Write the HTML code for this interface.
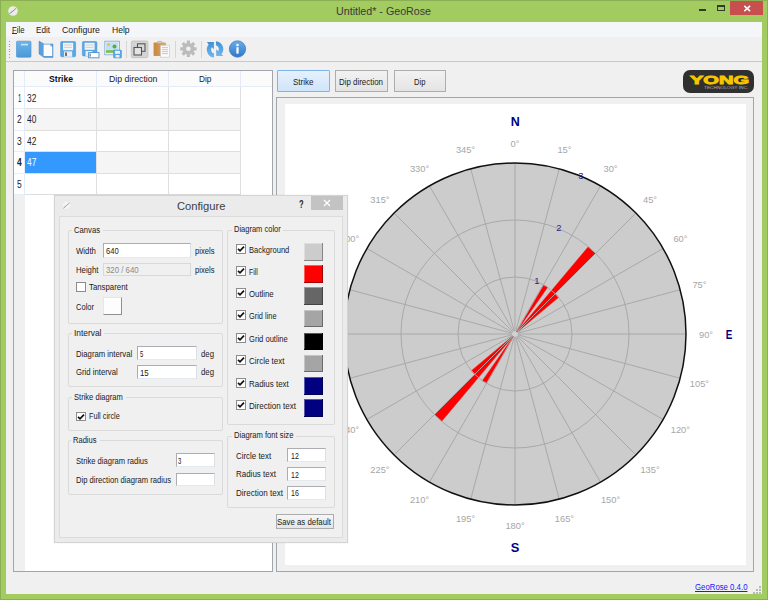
<!DOCTYPE html>
<html><head><meta charset="utf-8">
<style>
*{margin:0;padding:0;box-sizing:border-box}
html,body{width:768px;height:600px;overflow:hidden;background:#a2cb60;font-family:"Liberation Sans",sans-serif;color:#000;position:relative}
.a{position:absolute}
.t{position:absolute;white-space:nowrap;line-height:1}
</style></head><body>
<div class="a" style="left:0px;top:0px;width:768px;height:600px;background:#a2cb60;border:1px solid #8cae55"></div>
<svg class="a" style="left:7px;top:5px" width="12" height="12" viewBox="0 0 12 12"><circle cx="6" cy="6" r="4.8" fill="#ecebe8"/><path d="M2.6 8.6 L6 6" stroke="#4a90c8" stroke-width="1"/><path d="M6 6 L9.2 3.2" stroke="#d87a3a" stroke-width="1"/></svg>
<div class="t" style="left:336.00px;top:5.66px;font-size:11.50px;color:#3a3a3a;font-weight:normal;font-family:'Liberation Sans';transform:scaleX(0.929);transform-origin:0 50%;">Untitled* - GeoRose</div>
<div class="a" style="left:699px;top:9px;width:6.5px;height:2px;background:#303a2a"></div>
<div class="a" style="left:717px;top:5px;width:8px;height:6px;border:1px solid #2f3a28;border-top-width:2px"></div>
<div class="a" style="left:730px;top:1px;width:33px;height:14px;background:#c7504f"></div>
<svg class="a" style="left:741.6px;top:2.8px" width="11" height="11" viewBox="0 0 11 11"><path d="M2.3 2.9L8.1 8.1M8.1 2.9L2.3 8.1" stroke="#fff" stroke-width="1.5"/></svg>
<div class="a" style="left:6px;top:22px;width:756px;height:15px;background:#f5f6f9"></div>
<div class="t" style="left:12.00px;top:24.57px;font-size:9.60px;color:#1a1a1a;font-weight:normal;font-family:'Liberation Sans';transform:scaleX(0.808);transform-origin:0 50%;">File</div>
<div class="a" style="left:12px;top:33px;width:5px;height:1px;background:#333"></div>
<div class="t" style="left:36.00px;top:24.57px;font-size:9.60px;color:#1a1a1a;font-weight:normal;font-family:'Liberation Sans';transform:scaleX(0.846);transform-origin:0 50%;">Edit</div>
<div class="t" style="left:62.00px;top:24.57px;font-size:9.60px;color:#1a1a1a;font-weight:normal;font-family:'Liberation Sans';transform:scaleX(0.913);transform-origin:0 50%;">Configure</div>
<div class="t" style="left:111.70px;top:24.57px;font-size:9.60px;color:#1a1a1a;font-weight:normal;font-family:'Liberation Sans';transform:scaleX(0.892);transform-origin:0 50%;">Help</div>
<div class="a" style="left:6px;top:37px;width:756px;height:24px;background:#f0f0f0"></div>
<div class="a" style="left:6px;top:61px;width:756px;height:1px;background:#c9c9c9"></div>
<div class="a" style="left:9px;top:41px;width:1px;height:1px;background:#9a9a9a"></div>
<div class="a" style="left:9px;top:43.6px;width:1px;height:1px;background:#9a9a9a"></div>
<div class="a" style="left:9px;top:46.2px;width:1px;height:1px;background:#9a9a9a"></div>
<div class="a" style="left:9px;top:48.8px;width:1px;height:1px;background:#9a9a9a"></div>
<div class="a" style="left:9px;top:51.4px;width:1px;height:1px;background:#9a9a9a"></div>
<div class="a" style="left:9px;top:54px;width:1px;height:1px;background:#9a9a9a"></div>
<div class="a" style="left:9px;top:56.6px;width:1px;height:1px;background:#9a9a9a"></div>
<div class="a" style="left:126px;top:41px;width:1px;height:17px;background:#d6d6d6"></div>
<div class="a" style="left:175px;top:41px;width:1px;height:17px;background:#d6d6d6"></div>
<div class="a" style="left:201px;top:41px;width:1px;height:17px;background:#d6d6d6"></div>
<div class="a" style="left:6px;top:62px;width:756px;height:532px;background:#f0f0f0"></div>

<svg class="a" style="left:0;top:0" width="260" height="62" viewBox="0 0 260 62">
 <defs>
  <linearGradient id="gb" x1="0" y1="0" x2="0" y2="1"><stop offset="0" stop-color="#6db4ea"/><stop offset="1" stop-color="#4a9ad8"/></linearGradient>
  <linearGradient id="gi" x1="0" y1="0" x2="0" y2="1"><stop offset="0" stop-color="#6aaeea"/><stop offset="1" stop-color="#2f78c8"/></linearGradient>
  <linearGradient id="gc" x1="0" y1="0" x2="1" y2="0"><stop offset="0" stop-color="#c68840"/><stop offset="1" stop-color="#e0a868"/></linearGradient>
 </defs>
 <!-- 1 book -->
 <rect x="16.5" y="41.2" width="14.5" height="16" rx="1" fill="url(#gb)" stroke="#4a8fd0" stroke-width="0.6"/>
 <rect x="21" y="43.8" width="7" height="1.6" fill="#c8e4f8"/>
 <!-- 2 new doc -->
 <path d="M39 41 L44 44 L53 44 L53 57.5 L44 57.5 L39 54 Z" fill="#5a9fda" stroke="#4a8ccc" stroke-width="0.5"/>
 <path d="M43.6 44.6 L50 44.6 L52.2 46.8 L52.2 56 L43.6 56 Z" fill="#fbfbfb"/>
 <path d="M50 44.6 L50 46.8 L52.2 46.8" fill="#d0d0d0"/>
 <!-- 3 floppy -->
 <rect x="60.6" y="41.5" width="15" height="15.3" rx="1.2" fill="#58a6e2" stroke="#3f8fd2" stroke-width="0.5"/>
 <rect x="63" y="42.8" width="10.2" height="7.4" fill="#f4f4f4"/>
 <path d="M64 45h8M64 47.4h8" stroke="#b8b8b8" stroke-width="0.6"/>
 <rect x="64" y="51.4" width="8.2" height="5.4" fill="#e8eef4"/>
 <rect x="65.2" y="52.4" width="1.6" height="3.6" fill="#555"/>
 <!-- 4 save as -->
 <rect x="82.4" y="41.5" width="14.5" height="14.5" rx="1.2" fill="#58a6e2" stroke="#3f8fd2" stroke-width="0.5"/>
 <rect x="84.6" y="42.8" width="10" height="7" fill="#f4f4f4"/>
 <path d="M85.5 45h8M85.5 47.4h8" stroke="#b8b8b8" stroke-width="0.6"/>
 <rect x="85.5" y="51" width="7" height="5" fill="#e8eef4"/>
 <rect x="88.6" y="52.6" width="10.4" height="5.2" fill="#fff" stroke="#4a90d0" stroke-width="0.9"/>
 <rect x="89.6" y="53.6" width="1" height="3" fill="#555"/>
 <!-- 5 export image -->
 <rect x="104.8" y="41.2" width="14.6" height="13.6" fill="#e9f2fa" stroke="#7aa8d8" stroke-width="0.8"/>
 <rect x="106" y="42.4" width="12.2" height="7.8" fill="#bfe0f8"/>
 <rect x="106" y="50.2" width="12.2" height="2.6" fill="#7cbc48"/>
 <circle cx="108.5" cy="44.6" r="1.5" fill="#f5c030"/>
 <circle cx="114.5" cy="46.5" r="2" fill="#5ea83a"/>
 <rect x="113.5" y="50" width="8" height="8" rx="1" fill="#58a6e2" stroke="#3f8fd2" stroke-width="0.5"/>
 <rect x="115" y="50.8" width="5" height="3" fill="#f0f0f0"/>
 <rect x="115.5" y="55" width="4" height="2.5" fill="#e6eef6"/>
 <!-- 6 copy pressed -->
 <rect x="131.3" y="41" width="16.6" height="16.7" rx="1.5" fill="#d4d4d4" stroke="#bdbdbd" stroke-width="0.8"/>
 <rect x="137.5" y="43.8" width="7.5" height="7.5" fill="#d8d8d8" stroke="#555" stroke-width="1.1"/>
 <rect x="134" y="47.5" width="7.5" height="7.5" fill="#e4e4e4" stroke="#555" stroke-width="1.1"/>
 <!-- 7 paste -->
 <rect x="153.6" y="42.5" width="12.4" height="13.5" rx="0.8" fill="url(#gc)"/>
 <rect x="157.5" y="41.3" width="4.5" height="2.4" rx="0.8" fill="#c8c8c8" stroke="#999" stroke-width="0.4"/>
 <rect x="160.5" y="45.2" width="9" height="12" fill="#fafafa" stroke="#c4c4c4" stroke-width="0.6"/>
 <path d="M162 47.6h6M162 49.6h6M162 51.6h6M162 53.6h6" stroke="#9a9a9a" stroke-width="0.5"/>
 <!-- 8 gear -->
 <g transform="translate(188.4 48.8)" fill="#bcbcbc">
  <circle r="6" />
  <g>
   <rect x="-1.6" y="-8.2" width="3.2" height="3" rx="0.5"/>
   <rect x="-1.6" y="5.2" width="3.2" height="3" rx="0.5"/>
   <rect x="-8.2" y="-1.6" width="3" height="3.2" rx="0.5"/>
   <rect x="5.2" y="-1.6" width="3" height="3.2" rx="0.5"/>
  </g>
  <g transform="rotate(45)">
   <rect x="-1.6" y="-8.2" width="3.2" height="3" rx="0.5"/>
   <rect x="-1.6" y="5.2" width="3.2" height="3" rx="0.5"/>
   <rect x="-8.2" y="-1.6" width="3" height="3.2" rx="0.5"/>
   <rect x="5.2" y="-1.6" width="3" height="3.2" rx="0.5"/>
  </g>
  <circle r="2.3" fill="#f0f0f0"/>
 </g>
 <!-- 9 refresh -->
 <defs><linearGradient id="gr" x1="0" y1="0" x2="0" y2="1"><stop offset="0" stop-color="#3f90da"/><stop offset="1" stop-color="#72b8ee"/></linearGradient></defs>
 <g fill="url(#gr)">
  <path d="M214 57.6 A8 8 0 0 1 208.6 44.6 L206.9 42.1 L213.9 42.1 L213.9 49.2 L211.8 47.2 A4.2 4.2 0 0 0 214 53.6 Z"/>
  <path d="M216 41.2 A8 8 0 0 1 221.5 54.2 L223.4 56 L216.2 56 L216.2 49.2 L218.3 51.3 A4.2 4.2 0 0 0 216 45.2 Z"/>
 </g>
 <!-- 10 info -->
 <circle cx="237.5" cy="49" r="8.2" fill="url(#gi)" stroke="#2f6fb8" stroke-width="0.6"/>
 <circle cx="237.5" cy="45" r="1.3" fill="#fff"/>
 <rect x="236.4" y="47.2" width="2.2" height="6.4" fill="#fff"/>
</svg>

<div class="a" style="left:13px;top:70px;width:260px;height:502px;background:#fff;border:1px solid #a2a6ac"></div>
<div class="a" style="left:14px;top:71px;width:258px;height:15px;background:#fbfbfb"></div>
<div class="a" style="left:14px;top:86px;width:258px;height:1px;background:#e3ecf8"></div>
<div class="a" style="left:14px;top:195px;width:11px;height:376px;background:#f0f0f0"></div>
<div class="a" style="left:25px;top:108px;width:215px;height:22px;background:#f5f5f5"></div>
<div class="a" style="left:25px;top:151px;width:215px;height:22px;background:#f5f5f5"></div>
<div class="a" style="left:25px;top:152px;width:71.5px;height:21px;background:#3399ff"></div>
<div class="a" style="left:25px;top:108px;width:216px;height:1px;background:#dedede"></div>
<div class="a" style="left:25px;top:130px;width:216px;height:1px;background:#dedede"></div>
<div class="a" style="left:25px;top:151px;width:216px;height:1px;background:#dedede"></div>
<div class="a" style="left:25px;top:173px;width:216px;height:1px;background:#dedede"></div>
<div class="a" style="left:25px;top:194px;width:216px;height:1px;background:#dedede"></div>
<div class="a" style="left:14px;top:108px;width:11px;height:1px;background:#e6eef8"></div>
<div class="a" style="left:14px;top:130px;width:11px;height:1px;background:#e6eef8"></div>
<div class="a" style="left:14px;top:151px;width:11px;height:1px;background:#e6eef8"></div>
<div class="a" style="left:14px;top:173px;width:11px;height:1px;background:#e6eef8"></div>
<div class="a" style="left:14px;top:194px;width:11px;height:1px;background:#e6eef8"></div>
<div class="a" style="left:24px;top:71px;width:1px;height:124px;background:#e3ecf8"></div>
<div class="a" style="left:96px;top:71px;width:1px;height:15px;background:#e3ecf8"></div>
<div class="a" style="left:96px;top:87px;width:1px;height:108px;background:#dedede"></div>
<div class="a" style="left:168px;top:71px;width:1px;height:15px;background:#e3ecf8"></div>
<div class="a" style="left:168px;top:87px;width:1px;height:108px;background:#dedede"></div>
<div class="a" style="left:240px;top:71px;width:1px;height:15px;background:#e3ecf8"></div>
<div class="a" style="left:240px;top:87px;width:1px;height:108px;background:#dedede"></div>
<div class="t" style="left:49.20px;top:73.97px;font-size:9.60px;color:#111;font-weight:bold;font-family:'Liberation Sans';transform:scaleX(0.900);transform-origin:0 50%;">Strike</div>
<div class="t" style="left:108.75px;top:73.97px;font-size:9.60px;color:#222;font-weight:normal;font-family:'Liberation Sans';transform:scaleX(0.909);transform-origin:0 50%;">Dip direction</div>
<div class="t" style="left:198.60px;top:73.97px;font-size:9.60px;color:#222;font-weight:normal;font-family:'Liberation Sans';transform:scaleX(0.868);transform-origin:0 50%;">Dip</div>
<div class="t" style="left:17.60px;top:93.58px;font-size:10.00px;color:#222;font-weight:normal;font-family:'Liberation Sans';transform:scaleX(0.593);transform-origin:0 50%;">1</div>
<div class="t" style="left:27.20px;top:93.58px;font-size:10.00px;color:#222;font-weight:normal;font-family:'Liberation Sans';transform:scaleX(0.836);transform-origin:0 50%;">32</div>
<div class="t" style="left:17.00px;top:114.98px;font-size:10.00px;color:#222;font-weight:normal;font-family:'Liberation Sans';transform:scaleX(0.845);transform-origin:0 50%;">2</div>
<div class="t" style="left:27.20px;top:114.98px;font-size:10.00px;color:#222;font-weight:normal;font-family:'Liberation Sans';transform:scaleX(0.836);transform-origin:0 50%;">40</div>
<div class="t" style="left:17.00px;top:136.58px;font-size:10.00px;color:#222;font-weight:normal;font-family:'Liberation Sans';transform:scaleX(0.845);transform-origin:0 50%;">3</div>
<div class="t" style="left:27.20px;top:136.58px;font-size:10.00px;color:#222;font-weight:normal;font-family:'Liberation Sans';transform:scaleX(0.836);transform-origin:0 50%;">42</div>
<div class="t" style="left:17.00px;top:158.18px;font-size:10.00px;color:#222;font-weight:bold;font-family:'Liberation Sans';transform:scaleX(0.845);transform-origin:0 50%;">4</div>
<div class="t" style="left:27.20px;top:158.18px;font-size:10.00px;color:#fff;font-weight:normal;font-family:'Liberation Sans';transform:scaleX(0.836);transform-origin:0 50%;">47</div>
<div class="t" style="left:17.00px;top:179.88px;font-size:10.00px;color:#222;font-weight:normal;font-family:'Liberation Sans';transform:scaleX(0.845);transform-origin:0 50%;">5</div>
<div class="a" style="left:277px;top:70px;width:53px;height:22px;background:linear-gradient(#e6f1fc,#cfe5fa);border:1px solid #7eb4ea;border-radius:1px"></div>
<div class="a" style="left:335px;top:70px;width:53px;height:22px;background:linear-gradient(#f2f2f2,#e4e4e4);border:1px solid #adadad"></div>
<div class="a" style="left:394px;top:70px;width:52px;height:22px;background:linear-gradient(#f2f2f2,#e4e4e4);border:1px solid #adadad"></div>
<div class="t" style="left:292.90px;top:77.17px;font-size:9.60px;color:#1a1a1a;font-weight:normal;font-family:'Liberation Sans';transform:scaleX(0.832);transform-origin:0 50%;">Strike</div>
<div class="t" style="left:339.10px;top:77.17px;font-size:9.60px;color:#1a1a1a;font-weight:normal;font-family:'Liberation Sans';transform:scaleX(0.825);transform-origin:0 50%;">Dip direction</div>
<div class="t" style="left:414.30px;top:77.17px;font-size:9.60px;color:#1a1a1a;font-weight:normal;font-family:'Liberation Sans';transform:scaleX(0.791);transform-origin:0 50%;">Dip</div>
<div class="a" style="left:683px;top:70px;width:71px;height:22.5px;background:#303030;border-radius:7px"></div>
<div class="t" style="left:689.80px;top:74.70px;font-size:11.00px;color:#f7c600;font-weight:bold;font-family:'Liberation Sans';transform:scaleX(1.821);transform-origin:0 50%;-webkit-text-stroke:0.8px #f7c600;">YONG</div>
<div class="t" style="left:704.30px;top:86.77px;font-size:3.80px;color:#b0b0b0;font-weight:normal;font-family:'Liberation Sans';transform:scaleX(1.260);transform-origin:0 50%;">TECHNOLOGY INC.</div>
<div class="a" style="left:276px;top:97px;width:478px;height:475px;background:#f0f0f0;border:1px solid #a2a6ac"></div>
<div class="a" style="left:285px;top:104px;width:461px;height:461px;background:#fff"></div>
<svg class="a" style="left:0;top:0" width="768" height="600" viewBox="0 0 768 600"><circle cx="515" cy="334" r="171" fill="#cccccc"/><path d="M515.00 334.00 L543.50 284.64 L547.69 287.31Z M515.00 334.00 L588.28 246.67 L595.61 253.39Z M515.00 334.00 L555.31 293.69 L558.66 297.36Z M515.00 334.00 L486.50 383.36 L482.31 380.69Z M515.00 334.00 L441.72 421.33 L434.39 414.61Z M515.00 334.00 L474.69 374.31 L471.34 370.64Z" fill="#ff0000" stroke="#ee1010" stroke-width="0.4"/><path d="M515.00 331.00L515.00 163.00M515.78 331.10L559.26 168.83M516.50 331.40L600.50 185.91M517.12 331.88L635.92 213.08M517.60 332.50L663.09 248.50M517.90 333.22L680.17 289.74M518.00 334.00L686.00 334.00M517.90 334.78L680.17 378.26M517.60 335.50L663.09 419.50M517.12 336.12L635.92 454.92M516.50 336.60L600.50 482.09M515.78 336.90L559.26 499.17M515.00 337.00L515.00 505.00M514.22 336.90L470.74 499.17M513.50 336.60L429.50 482.09M512.88 336.12L394.08 454.92M512.40 335.50L366.91 419.50M512.10 334.78L349.83 378.26M512.00 334.00L344.00 334.00M512.10 333.22L349.83 289.74M512.40 332.50L366.91 248.50M512.88 331.88L394.08 213.08M513.50 331.40L429.50 185.91M514.22 331.10L470.74 168.83" stroke="#a6a6a6" stroke-width="0.95" fill="none"/><circle cx="515" cy="334" r="57" fill="none" stroke="#a6a6a6" stroke-width="0.95"/><circle cx="515" cy="334" r="114" fill="none" stroke="#a6a6a6" stroke-width="0.95"/><circle cx="515" cy="334" r="171" fill="none" stroke="#111" stroke-width="1.5"/><circle cx="515" cy="334" r="2.6" fill="#d2d2d2"/></svg>
<div class="t" style="left:510.55px;top:139.82px;font-size:9.30px;color:#a6a6a6;font-weight:normal;font-family:'Liberation Sans';">0°</div>
<div class="t" style="left:557.40px;top:146.33px;font-size:9.30px;color:#a6a6a6;font-weight:normal;font-family:'Liberation Sans';">15°</div>
<div class="t" style="left:603.47px;top:165.41px;font-size:9.30px;color:#a6a6a6;font-weight:normal;font-family:'Liberation Sans';">30°</div>
<div class="t" style="left:643.03px;top:195.76px;font-size:9.30px;color:#a6a6a6;font-weight:normal;font-family:'Liberation Sans';">45°</div>
<div class="t" style="left:673.38px;top:235.32px;font-size:9.30px;color:#a6a6a6;font-weight:normal;font-family:'Liberation Sans';">60°</div>
<div class="t" style="left:692.46px;top:281.38px;font-size:9.30px;color:#a6a6a6;font-weight:normal;font-family:'Liberation Sans';">75°</div>
<div class="t" style="left:698.97px;top:330.82px;font-size:9.30px;color:#a6a6a6;font-weight:normal;font-family:'Liberation Sans';">90°</div>
<div class="t" style="left:689.87px;top:380.25px;font-size:9.30px;color:#a6a6a6;font-weight:normal;font-family:'Liberation Sans';">105°</div>
<div class="t" style="left:670.79px;top:426.32px;font-size:9.30px;color:#a6a6a6;font-weight:normal;font-family:'Liberation Sans';">120°</div>
<div class="t" style="left:640.44px;top:465.87px;font-size:9.30px;color:#a6a6a6;font-weight:normal;font-family:'Liberation Sans';">135°</div>
<div class="t" style="left:600.88px;top:496.23px;font-size:9.30px;color:#a6a6a6;font-weight:normal;font-family:'Liberation Sans';">150°</div>
<div class="t" style="left:554.82px;top:515.31px;font-size:9.30px;color:#a6a6a6;font-weight:normal;font-family:'Liberation Sans';">165°</div>
<div class="t" style="left:505.38px;top:521.82px;font-size:9.30px;color:#a6a6a6;font-weight:normal;font-family:'Liberation Sans';">180°</div>
<div class="t" style="left:455.95px;top:515.31px;font-size:9.30px;color:#a6a6a6;font-weight:normal;font-family:'Liberation Sans';">195°</div>
<div class="t" style="left:409.88px;top:496.23px;font-size:9.30px;color:#a6a6a6;font-weight:normal;font-family:'Liberation Sans';">210°</div>
<div class="t" style="left:370.33px;top:465.87px;font-size:9.30px;color:#a6a6a6;font-weight:normal;font-family:'Liberation Sans';">225°</div>
<div class="t" style="left:339.97px;top:426.32px;font-size:9.30px;color:#a6a6a6;font-weight:normal;font-family:'Liberation Sans';">240°</div>
<div class="t" style="left:320.89px;top:380.25px;font-size:9.30px;color:#a6a6a6;font-weight:normal;font-family:'Liberation Sans';">255°</div>
<div class="t" style="left:314.38px;top:330.82px;font-size:9.30px;color:#a6a6a6;font-weight:normal;font-family:'Liberation Sans';">270°</div>
<div class="t" style="left:320.89px;top:281.38px;font-size:9.30px;color:#a6a6a6;font-weight:normal;font-family:'Liberation Sans';">285°</div>
<div class="t" style="left:339.97px;top:235.32px;font-size:9.30px;color:#a6a6a6;font-weight:normal;font-family:'Liberation Sans';">300°</div>
<div class="t" style="left:370.33px;top:195.76px;font-size:9.30px;color:#a6a6a6;font-weight:normal;font-family:'Liberation Sans';">315°</div>
<div class="t" style="left:409.88px;top:165.41px;font-size:9.30px;color:#a6a6a6;font-weight:normal;font-family:'Liberation Sans';">330°</div>
<div class="t" style="left:455.95px;top:146.33px;font-size:9.30px;color:#a6a6a6;font-weight:normal;font-family:'Liberation Sans';">345°</div>
<div class="t" style="left:534.32px;top:276.89px;font-size:9.30px;color:#1c1c8c;font-weight:normal;font-family:'Liberation Sans';">1</div>
<div class="t" style="left:556.22px;top:224.27px;font-size:9.30px;color:#1c1c8c;font-weight:normal;font-family:'Liberation Sans';">2</div>
<div class="t" style="left:578.13px;top:171.65px;font-size:9.30px;color:#1c1c8c;font-weight:normal;font-family:'Liberation Sans';">3</div>
<div class="t" style="left:511.06px;top:115.62px;font-size:12.00px;color:#000080;font-weight:bold;font-family:'Liberation Sans';transform:scaleX(1.038);transform-origin:50% 50%;">N</div>
<div class="t" style="left:724.59px;top:328.72px;font-size:12.00px;color:#000080;font-weight:bold;font-family:'Liberation Sans';transform:scaleX(0.823);transform-origin:50% 50%;">E</div>
<div class="t" style="left:511.49px;top:541.52px;font-size:12.00px;color:#000080;font-weight:bold;font-family:'Liberation Sans';transform:scaleX(1.073);transform-origin:50% 50%;">S</div>
<div class="t" style="left:296.34px;top:328.72px;font-size:12.00px;color:#000080;font-weight:bold;font-family:'Liberation Sans';transform:scaleX(0.883);transform-origin:50% 50%;">W</div>
<div class="t" style="left:695.40px;top:581.97px;font-size:9.60px;color:#1a1aff;font-weight:normal;font-family:'Liberation Sans';transform:scaleX(0.813);transform-origin:0 50%;text-decoration:underline;">GeoRose 0.4.0</div>
<div class="a" style="left:759px;top:586px;width:1.5px;height:1.5px;background:#b8b8b8"></div>
<div class="a" style="left:759px;top:589px;width:1.5px;height:1.5px;background:#b8b8b8"></div>
<div class="a" style="left:756px;top:589px;width:1.5px;height:1.5px;background:#b8b8b8"></div>
<div class="a" style="left:759px;top:592px;width:1.5px;height:1.5px;background:#b8b8b8"></div>
<div class="a" style="left:756px;top:592px;width:1.5px;height:1.5px;background:#b8b8b8"></div>
<div class="a" style="left:753px;top:592px;width:1.5px;height:1.5px;background:#b8b8b8"></div>
<div class="a" style="left:54px;top:195px;width:294px;height:348px;background:#ebebeb;border:1px solid #d4d4d4;box-shadow:0 0 2px rgba(0,0,0,0.08)"></div>
<svg class="a" style="left:61.2px;top:199.8px" width="11" height="11" viewBox="0 0 11 11"><circle cx="5.5" cy="5.5" r="4.6" fill="#f3f3f3" stroke="#e0e0e0" stroke-width="0.5"/><path d="M2.4 8.2 L5.5 5.5" stroke="#5a9ad0" stroke-width="0.9"/><path d="M5.5 5.5 L8.6 2.8" stroke="#d0904a" stroke-width="0.9"/></svg>
<div class="t" style="left:177.20px;top:201.99px;font-size:10.40px;color:#404040;font-weight:normal;font-family:'Liberation Sans';transform:scaleX(1.076);transform-origin:0 50%;">Configure</div>
<div class="t" style="left:298.90px;top:199.58px;font-size:10.00px;color:#222;font-weight:bold;font-family:'Liberation Sans';transform:scaleX(0.753);transform-origin:0 50%;">?</div>
<div class="a" style="left:311px;top:196px;width:32px;height:14px;background:#c3c3c3"></div>
<svg class="a" style="left:322.2px;top:198.3px" width="10" height="10" viewBox="0 0 10 10"><path d="M2 2L8 8M8 2L2 8" stroke="#fff" stroke-width="1.2"/></svg>
<div class="a" style="left:59px;top:216px;width:284px;height:322px;background:#f0f0f0;border:1px solid #dcdcdc"></div>
<div class="a" style="left:67.5px;top:230px;width:155px;height:93.5px;border:1px solid #dadada;border-radius:2px"></div>
<div class="a" style="left:71.8px;top:226px;width:31px;height:8px;background:#f0f0f0"></div>
<div class="t" style="left:73.80px;top:225.87px;font-size:9.20px;color:#1a1a1a;font-weight:normal;font-family:'Liberation Sans';transform:scaleX(0.835);transform-origin:0 50%;">Canvas</div>
<div class="a" style="left:67.5px;top:333px;width:155px;height:54px;border:1px solid #dadada;border-radius:2px"></div>
<div class="a" style="left:71.75px;top:329px;width:32.5px;height:8px;background:#f0f0f0"></div>
<div class="t" style="left:73.75px;top:328.87px;font-size:9.20px;color:#1a1a1a;font-weight:normal;font-family:'Liberation Sans';transform:scaleX(0.912);transform-origin:0 50%;">Interval</div>
<div class="a" style="left:67.5px;top:397px;width:155px;height:33.5px;border:1px solid #dadada;border-radius:2px"></div>
<div class="a" style="left:71.75px;top:393px;width:53.75px;height:8px;background:#f0f0f0"></div>
<div class="t" style="left:73.75px;top:392.87px;font-size:9.20px;color:#1a1a1a;font-weight:normal;font-family:'Liberation Sans';transform:scaleX(0.823);transform-origin:0 50%;">Strike diagram</div>
<div class="a" style="left:67.5px;top:440.3px;width:155px;height:54.7px;border:1px solid #dadada;border-radius:2px"></div>
<div class="a" style="left:71.4px;top:436.3px;width:28.5px;height:8px;background:#f0f0f0"></div>
<div class="t" style="left:73.40px;top:436.17px;font-size:9.20px;color:#1a1a1a;font-weight:normal;font-family:'Liberation Sans';transform:scaleX(0.821);transform-origin:0 50%;">Radius</div>
<div class="a" style="left:227.3px;top:229.6px;width:107.7px;height:195.6px;border:1px solid #dadada;border-radius:2px"></div>
<div class="a" style="left:231.5px;top:225.6px;width:51.7px;height:8px;background:#f0f0f0"></div>
<div class="t" style="left:233.50px;top:225.47px;font-size:9.20px;color:#1a1a1a;font-weight:normal;font-family:'Liberation Sans';transform:scaleX(0.817);transform-origin:0 50%;">Diagram color</div>
<div class="a" style="left:227.3px;top:435.5px;width:107.7px;height:72.9px;border:1px solid #dadada;border-radius:2px"></div>
<div class="a" style="left:231.6px;top:431.5px;width:64.4px;height:8px;background:#f0f0f0"></div>
<div class="t" style="left:233.60px;top:431.37px;font-size:9.20px;color:#1a1a1a;font-weight:normal;font-family:'Liberation Sans';transform:scaleX(0.831);transform-origin:0 50%;">Diagram font size</div>
<div class="t" style="left:76.00px;top:245.92px;font-size:9.50px;color:#1a1a1a;font-weight:normal;font-family:'Liberation Sans';transform:scaleX(0.819);transform-origin:0 50%;">Width</div>
<div class="a" style="left:103px;top:243px;width:88px;height:14.5px;background:#fff;border:1px solid #abadb3;border-bottom-color:#e3e9ef;border-right-color:#dbdfe6"></div>
<div class="t" style="left:105.70px;top:245.72px;font-size:9.50px;color:#1a1a1a;font-weight:normal;font-family:'Liberation Sans';transform:scaleX(0.801);transform-origin:0 50%;">640</div>
<div class="t" style="left:194.50px;top:245.72px;font-size:9.50px;color:#1a1a1a;font-weight:normal;font-family:'Liberation Sans';transform:scaleX(0.803);transform-origin:0 50%;">pixels</div>
<div class="t" style="left:76.00px;top:264.52px;font-size:9.50px;color:#1a1a1a;font-weight:normal;font-family:'Liberation Sans';transform:scaleX(0.815);transform-origin:0 50%;">Height</div>
<div class="a" style="left:103px;top:262.5px;width:88px;height:13.5px;background:#f0f0f0;border:1px solid #d9d9d9"></div>
<div class="t" style="left:105.70px;top:264.92px;font-size:9.50px;color:#8a8a8a;font-weight:normal;font-family:'Liberation Sans';transform:scaleX(0.823);transform-origin:0 50%;">320 / 640</div>
<div class="t" style="left:194.50px;top:264.52px;font-size:9.50px;color:#1a1a1a;font-weight:normal;font-family:'Liberation Sans';transform:scaleX(0.803);transform-origin:0 50%;">pixels</div>
<div class="a" style="left:76px;top:282px;width:9.8px;height:9.8px;background:#fff;border:1px solid #8c8c8c"></div>
<div class="t" style="left:89.00px;top:282.12px;font-size:9.50px;color:#1a1a1a;font-weight:normal;font-family:'Liberation Sans';transform:scaleX(0.823);transform-origin:0 50%;">Tansparent</div>
<div class="t" style="left:75.75px;top:301.92px;font-size:9.50px;color:#1a1a1a;font-weight:normal;font-family:'Liberation Sans';transform:scaleX(0.793);transform-origin:0 50%;">Color</div>
<div class="a" style="left:102.5px;top:297px;width:19.5px;height:17.5px;background:#fdfdfd;border:1px solid #e6e6e6;border-right:1px solid #8f8f8f;border-bottom:1px solid #8f8f8f"></div>
<div class="t" style="left:75.75px;top:348.72px;font-size:9.50px;color:#1a1a1a;font-weight:normal;font-family:'Liberation Sans';transform:scaleX(0.813);transform-origin:0 50%;">Diagram interval</div>
<div class="a" style="left:136.75px;top:346.3px;width:60.25px;height:13.7px;background:#fff;border:1px solid #abadb3;border-bottom-color:#e3e9ef;border-right-color:#dbdfe6"></div>
<div class="t" style="left:139.50px;top:348.92px;font-size:9.50px;color:#1a1a1a;font-weight:normal;font-family:'Liberation Sans';transform:scaleX(0.623);transform-origin:0 50%;">5</div>
<div class="t" style="left:201.25px;top:348.72px;font-size:9.50px;color:#1a1a1a;font-weight:normal;font-family:'Liberation Sans';transform:scaleX(0.820);transform-origin:0 50%;">deg</div>
<div class="t" style="left:75.75px;top:367.42px;font-size:9.50px;color:#1a1a1a;font-weight:normal;font-family:'Liberation Sans';transform:scaleX(0.815);transform-origin:0 50%;">Grid interval</div>
<div class="a" style="left:136.75px;top:365px;width:60.25px;height:13.8px;background:#fff;border:1px solid #abadb3;border-bottom-color:#e3e9ef;border-right-color:#dbdfe6"></div>
<div class="t" style="left:139.50px;top:367.92px;font-size:9.50px;color:#1a1a1a;font-weight:normal;font-family:'Liberation Sans';transform:scaleX(0.827);transform-origin:0 50%;">15</div>
<div class="t" style="left:201.25px;top:367.42px;font-size:9.50px;color:#1a1a1a;font-weight:normal;font-family:'Liberation Sans';transform:scaleX(0.820);transform-origin:0 50%;">deg</div>
<div class="a" style="left:76.25px;top:411.5px;width:9.8px;height:9.8px;background:#fff;border:1px solid #8c8c8c"></div>
<svg class="a" style="left:76.25px;top:411.5px" width="10" height="10" viewBox="0 0 10 10"><path d="M2 4.9 L4 6.9 L8 2.6" fill="none" stroke="#111" stroke-width="1.7"/></svg>
<div class="t" style="left:88.75px;top:411.42px;font-size:9.50px;color:#1a1a1a;font-weight:normal;font-family:'Liberation Sans';transform:scaleX(0.766);transform-origin:0 50%;">Full circle</div>
<div class="t" style="left:75.80px;top:455.62px;font-size:9.50px;color:#1a1a1a;font-weight:normal;font-family:'Liberation Sans';transform:scaleX(0.801);transform-origin:0 50%;">Strike diagram radius</div>
<div class="a" style="left:175.8px;top:453.2px;width:39px;height:13.8px;background:#fff;border:1px solid #abadb3;border-bottom-color:#e3e9ef;border-right-color:#dbdfe6"></div>
<div class="t" style="left:178.10px;top:455.72px;font-size:9.50px;color:#1a1a1a;font-weight:normal;font-family:'Liberation Sans';transform:scaleX(0.623);transform-origin:0 50%;">3</div>
<div class="t" style="left:75.80px;top:474.82px;font-size:9.50px;color:#1a1a1a;font-weight:normal;font-family:'Liberation Sans';transform:scaleX(0.803);transform-origin:0 50%;">Dip direction diagram radius</div>
<div class="a" style="left:175.8px;top:472.7px;width:39px;height:13px;background:#fff;border:1px solid #abadb3;border-bottom-color:#e3e9ef;border-right-color:#dbdfe6"></div>
<div class="a" style="left:236.1px;top:243.9px;width:9.8px;height:9.8px;background:#fff;border:1px solid #8c8c8c"></div>
<svg class="a" style="left:236.1px;top:243.9px" width="10" height="10" viewBox="0 0 10 10"><path d="M2 4.9 L4 6.9 L8 2.6" fill="none" stroke="#111" stroke-width="1.7"/></svg>
<div class="t" style="left:248.50px;top:244.92px;font-size:9.50px;color:#1a1a1a;font-weight:normal;font-family:'Liberation Sans';transform:scaleX(0.795);transform-origin:0 50%;">Background</div>
<div class="a" style="left:303.8px;top:243px;width:18.8px;height:17.5px;background:#cccccc;border-right:1.5px solid rgba(0,0,0,0.35);border-bottom:1.5px solid rgba(0,0,0,0.35);box-shadow:inset 1px 1px 0 rgba(255,255,255,0.35)"></div>
<div class="a" style="left:236.1px;top:266.1px;width:9.8px;height:9.8px;background:#fff;border:1px solid #8c8c8c"></div>
<svg class="a" style="left:236.1px;top:266.1px" width="10" height="10" viewBox="0 0 10 10"><path d="M2 4.9 L4 6.9 L8 2.6" fill="none" stroke="#111" stroke-width="1.7"/></svg>
<div class="t" style="left:248.50px;top:267.12px;font-size:9.50px;color:#1a1a1a;font-weight:normal;font-family:'Liberation Sans';transform:scaleX(0.725);transform-origin:0 50%;">Fill</div>
<div class="a" style="left:303.8px;top:265.2px;width:18.8px;height:17.5px;background:#ff0000;border-right:1.5px solid rgba(0,0,0,0.35);border-bottom:1.5px solid rgba(0,0,0,0.35);box-shadow:inset 1px 1px 0 rgba(255,255,255,0.35)"></div>
<div class="a" style="left:236.1px;top:288.3px;width:9.8px;height:9.8px;background:#fff;border:1px solid #8c8c8c"></div>
<svg class="a" style="left:236.1px;top:288.3px" width="10" height="10" viewBox="0 0 10 10"><path d="M2 4.9 L4 6.9 L8 2.6" fill="none" stroke="#111" stroke-width="1.7"/></svg>
<div class="t" style="left:248.50px;top:289.32px;font-size:9.50px;color:#1a1a1a;font-weight:normal;font-family:'Liberation Sans';transform:scaleX(0.820);transform-origin:0 50%;">Outline</div>
<div class="a" style="left:303.8px;top:287.4px;width:18.8px;height:17.5px;background:#666666;border-right:1.5px solid rgba(0,0,0,0.35);border-bottom:1.5px solid rgba(0,0,0,0.35);box-shadow:inset 1px 1px 0 rgba(255,255,255,0.35)"></div>
<div class="a" style="left:236.1px;top:310.4px;width:9.8px;height:9.8px;background:#fff;border:1px solid #8c8c8c"></div>
<svg class="a" style="left:236.1px;top:310.4px" width="10" height="10" viewBox="0 0 10 10"><path d="M2 4.9 L4 6.9 L8 2.6" fill="none" stroke="#111" stroke-width="1.7"/></svg>
<div class="t" style="left:248.50px;top:311.42px;font-size:9.50px;color:#1a1a1a;font-weight:normal;font-family:'Liberation Sans';transform:scaleX(0.777);transform-origin:0 50%;">Grid line</div>
<div class="a" style="left:303.8px;top:309.5px;width:18.8px;height:17.5px;background:#a5a5a5;border-right:1.5px solid rgba(0,0,0,0.35);border-bottom:1.5px solid rgba(0,0,0,0.35);box-shadow:inset 1px 1px 0 rgba(255,255,255,0.35)"></div>
<div class="a" style="left:236.1px;top:333.4px;width:9.8px;height:9.8px;background:#fff;border:1px solid #8c8c8c"></div>
<svg class="a" style="left:236.1px;top:333.4px" width="10" height="10" viewBox="0 0 10 10"><path d="M2 4.9 L4 6.9 L8 2.6" fill="none" stroke="#111" stroke-width="1.7"/></svg>
<div class="t" style="left:248.50px;top:334.42px;font-size:9.50px;color:#1a1a1a;font-weight:normal;font-family:'Liberation Sans';transform:scaleX(0.798);transform-origin:0 50%;">Grid outline</div>
<div class="a" style="left:303.8px;top:332.5px;width:18.8px;height:17.5px;background:#000000;border-right:1.5px solid rgba(0,0,0,0.35);border-bottom:1.5px solid rgba(0,0,0,0.35);box-shadow:inset 1px 1px 0 rgba(255,255,255,0.35)"></div>
<div class="a" style="left:236.1px;top:355.4px;width:9.8px;height:9.8px;background:#fff;border:1px solid #8c8c8c"></div>
<svg class="a" style="left:236.1px;top:355.4px" width="10" height="10" viewBox="0 0 10 10"><path d="M2 4.9 L4 6.9 L8 2.6" fill="none" stroke="#111" stroke-width="1.7"/></svg>
<div class="t" style="left:248.50px;top:356.42px;font-size:9.50px;color:#1a1a1a;font-weight:normal;font-family:'Liberation Sans';transform:scaleX(0.838);transform-origin:0 50%;">Circle text</div>
<div class="a" style="left:303.8px;top:354.5px;width:18.8px;height:17.5px;background:#a5a5a5;border-right:1.5px solid rgba(0,0,0,0.35);border-bottom:1.5px solid rgba(0,0,0,0.35);box-shadow:inset 1px 1px 0 rgba(255,255,255,0.35)"></div>
<div class="a" style="left:236.1px;top:378px;width:9.8px;height:9.8px;background:#fff;border:1px solid #8c8c8c"></div>
<svg class="a" style="left:236.1px;top:378px" width="10" height="10" viewBox="0 0 10 10"><path d="M2 4.9 L4 6.9 L8 2.6" fill="none" stroke="#111" stroke-width="1.7"/></svg>
<div class="t" style="left:248.50px;top:379.02px;font-size:9.50px;color:#1a1a1a;font-weight:normal;font-family:'Liberation Sans';transform:scaleX(0.837);transform-origin:0 50%;">Radius text</div>
<div class="a" style="left:303.8px;top:377.1px;width:18.8px;height:17.5px;background:#000080;border-right:1.5px solid rgba(0,0,0,0.35);border-bottom:1.5px solid rgba(0,0,0,0.35);box-shadow:inset 1px 1px 0 rgba(255,255,255,0.35)"></div>
<div class="a" style="left:236.1px;top:400px;width:9.8px;height:9.8px;background:#fff;border:1px solid #8c8c8c"></div>
<svg class="a" style="left:236.1px;top:400px" width="10" height="10" viewBox="0 0 10 10"><path d="M2 4.9 L4 6.9 L8 2.6" fill="none" stroke="#111" stroke-width="1.7"/></svg>
<div class="t" style="left:248.50px;top:401.02px;font-size:9.50px;color:#1a1a1a;font-weight:normal;font-family:'Liberation Sans';transform:scaleX(0.848);transform-origin:0 50%;">Direction text</div>
<div class="a" style="left:303.8px;top:399.1px;width:18.8px;height:17.5px;background:#000080;border-right:1.5px solid rgba(0,0,0,0.35);border-bottom:1.5px solid rgba(0,0,0,0.35);box-shadow:inset 1px 1px 0 rgba(255,255,255,0.35)"></div>
<div class="t" style="left:235.50px;top:450.62px;font-size:9.50px;color:#1a1a1a;font-weight:normal;font-family:'Liberation Sans';transform:scaleX(0.833);transform-origin:0 50%;">Circle text</div>
<div class="a" style="left:287.1px;top:448.2px;width:38.7px;height:14px;background:#fff;border:1px solid #abadb3;border-bottom-color:#e3e9ef;border-right-color:#dbdfe6"></div>
<div class="t" style="left:291.00px;top:450.92px;font-size:9.50px;color:#1a1a1a;font-weight:normal;font-family:'Liberation Sans';transform:scaleX(0.737);transform-origin:0 50%;">12</div>
<div class="t" style="left:235.50px;top:469.32px;font-size:9.50px;color:#1a1a1a;font-weight:normal;font-family:'Liberation Sans';transform:scaleX(0.839);transform-origin:0 50%;">Radius text</div>
<div class="a" style="left:287.1px;top:466.9px;width:38.7px;height:14px;background:#fff;border:1px solid #abadb3;border-bottom-color:#e3e9ef;border-right-color:#dbdfe6"></div>
<div class="t" style="left:291.00px;top:469.62px;font-size:9.50px;color:#1a1a1a;font-weight:normal;font-family:'Liberation Sans';transform:scaleX(0.737);transform-origin:0 50%;">12</div>
<div class="t" style="left:235.50px;top:488.12px;font-size:9.50px;color:#1a1a1a;font-weight:normal;font-family:'Liberation Sans';transform:scaleX(0.846);transform-origin:0 50%;">Direction text</div>
<div class="a" style="left:287.1px;top:485.7px;width:38.7px;height:14px;background:#fff;border:1px solid #abadb3;border-bottom-color:#e3e9ef;border-right-color:#dbdfe6"></div>
<div class="t" style="left:291.00px;top:488.42px;font-size:9.50px;color:#1a1a1a;font-weight:normal;font-family:'Liberation Sans';transform:scaleX(0.737);transform-origin:0 50%;">16</div>
<div class="a" style="left:275.8px;top:513.8px;width:58.2px;height:14.8px;background:linear-gradient(#f6f6f6,#e6e6e6);border:1px solid #acacac"></div>
<div class="t" style="left:277.30px;top:517.02px;font-size:9.50px;color:#1a1a1a;font-weight:normal;font-family:'Liberation Sans';transform:scaleX(0.824);transform-origin:0 50%;">Save as default</div>
</body></html>
